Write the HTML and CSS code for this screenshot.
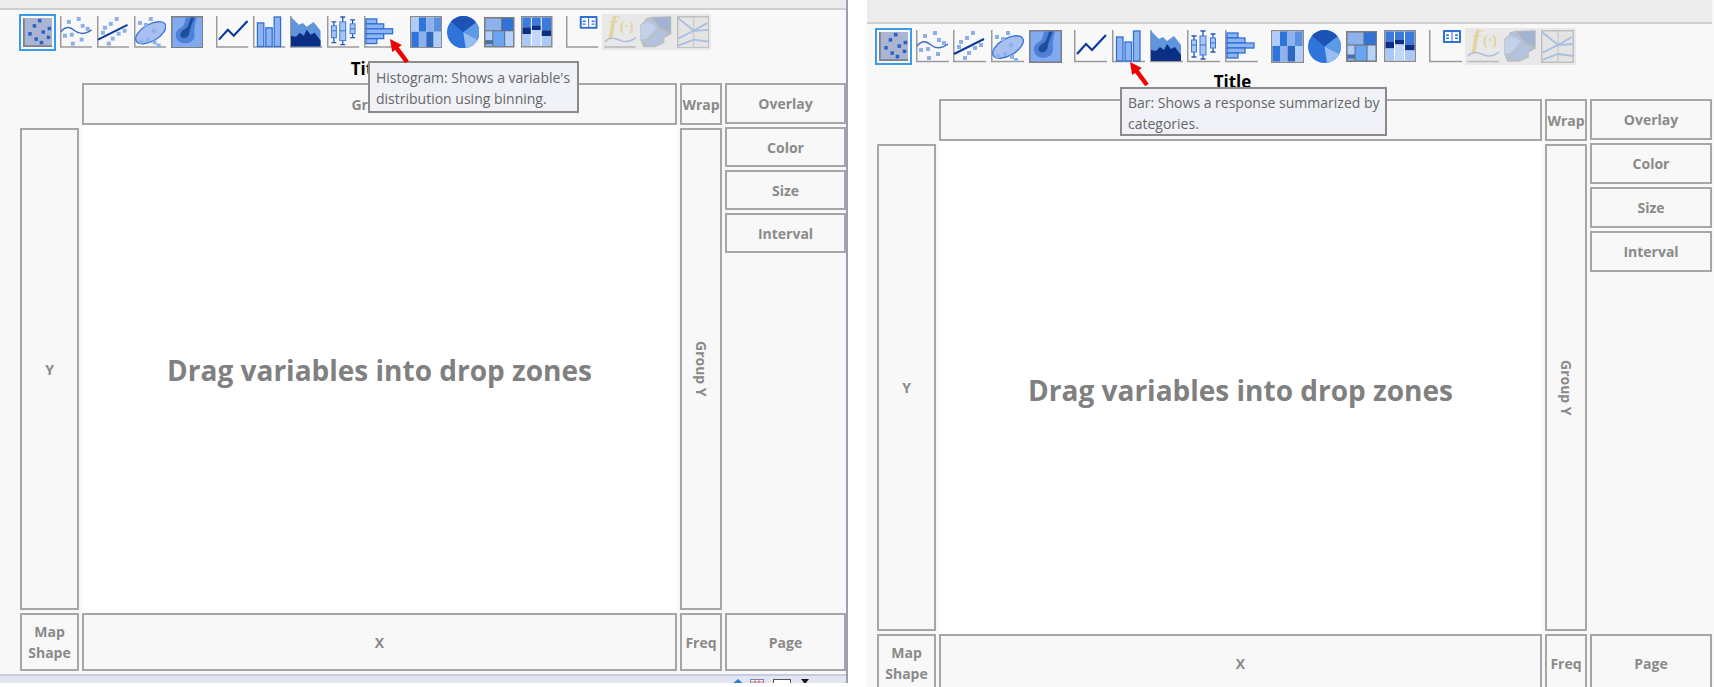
FILE: index.html
```html
<!DOCTYPE html>
<html lang="en">
<head>
<meta charset="utf-8">
<title>Graph Builder</title>
<link rel="stylesheet" href="styles.css">
</head>
<body>
<svg class="sprite" aria-hidden="true">
  <defs>
    <symbol id="axes" viewBox="0 0 33 33"><path d="M.75 0V31.5H33" fill="none" stroke="#9a9a9a" stroke-width="1.5"/></symbol>
    <symbol id="i1" viewBox="0 0 33 33">
      <rect width="33" height="33" fill="#a9b5d2"/><path d="M1 0V32H33" fill="none" stroke="#7f7f8a" stroke-width="2"/>
      <g fill="#2a62c4"><rect x="17" y="1" width="4" height="4"/><rect x="11" y="7" width="4" height="4"/><rect x="28" y="10" width="4" height="4"/><rect x="6" y="16" width="4" height="4"/><rect x="21" y="14" width="4" height="4"/><rect x="27" y="20" width="4" height="4"/><rect x="13" y="22" width="4" height="4"/><rect x="19" y="26" width="4" height="4"/></g>
    </symbol>
    <symbol id="i2" viewBox="0 0 33 33">
      <use href="#axes"/>
      <g fill="#8db0e8"><rect x="7" y="4" width="4" height="4"/><rect x="17" y="1" width="4" height="4"/><rect x="21" y="8" width="4" height="4"/><rect x="26" y="11" width="4" height="4"/><rect x="3" y="18" width="4" height="4"/><rect x="10" y="17" width="4" height="4"/><rect x="20" y="22" width="4" height="4"/><rect x="11" y="26" width="4" height="4"/></g>
      <path d="M1 16C6 10 10 11 15 15S25 19 32 14" fill="none" stroke="#3f6fc0" stroke-width="1.5"/>
    </symbol>
    <symbol id="i3" viewBox="0 0 33 33">
      <use href="#axes"/>
      <g fill="#8db0e8"><rect x="18" y="1" width="4" height="4"/><rect x="12" y="6" width="4" height="4"/><rect x="6" y="10" width="4" height="4"/><rect x="4" y="15" width="4" height="4"/><rect x="26" y="13" width="4" height="4"/><rect x="20" y="16" width="4" height="4"/><rect x="14" y="21" width="4" height="4"/><rect x="10" y="26" width="4" height="4"/></g>
      <path d="M1 24L31 9" stroke="#0b3a9b" stroke-width="2"/>
    </symbol>
    <symbol id="i4" viewBox="0 0 33 33">
      <use href="#axes"/>
      <ellipse cx="17" cy="17" rx="17" ry="8.5" transform="rotate(-30 17 17)" fill="#a9bfef" stroke="#3b78d8" stroke-width="1.4"/>
      <g fill="#8db0e8"><rect x="4" y="5" width="4" height="4"/><rect x="15" y="1" width="4" height="4"/><rect x="10" y="7" width="4" height="4"/><rect x="18" y="13" width="4" height="4"/><rect x="12" y="22" width="4" height="4"/><rect x="19" y="25" width="4" height="4"/><rect x="23" y="28" width="4" height="4"/><rect x="5" y="24" width="4" height="4"/></g>
    </symbol>
    <symbol id="i5" viewBox="0 0 33 33">
      <rect x=".75" y=".75" width="31.5" height="31.5" fill="#82aaef" stroke="#7d7d82" stroke-width="1.5"/>
      <path d="M15 1.5H26C24 9 23 15 24 20C24 27 14 30 8 26C3 22 4 14 10 12C14 10 14 5 15 1.5Z" fill="#4f80d8"/>
      <path d="M20 1.5H24C21 8 19 13 18.500 18C17 23 11 24 9.500 20C9 16 13 14 16 12C18 9 19 5 20 1.5Z" fill="#1f4f99"/>
    </symbol>
    <symbol id="i6" viewBox="0 0 33 33"><use href="#axes"/><path d="M3 24L12 14L18 20L32 5" fill="none" stroke="#0b3a9b" stroke-width="2.2"/></symbol>
    <symbol id="i7" viewBox="0 0 33 33">
      <use href="#axes"/>
      <g fill="#8fb4f2" stroke="#2f6fd8" stroke-width="1.3"><rect x="4.500" y="7" width="6.500" height="24"/><rect x="13" y="12" width="6.500" height="19"/><rect x="21.500" y="1" width="6.500" height="30"/></g>
    </symbol>
    <symbol id="i8" viewBox="0 0 33 33">
      <use href="#axes"/>
      <path d="M1 1L9 9L13 7L17 11L24 6L31 15V31H1Z" fill="#6094dc"/>
      <path d="M1 20L6 21L10 17L14 20L17 14L21 19L25 17L31 25V31H1Z" fill="#0a2f85"/>
    </symbol>
    <symbol id="i9" viewBox="0 0 33 33">
      <use href="#axes"/>
      <path d="M7 6V27M4.500 6H9.500M4.500 27H9.500M16 1V29M13.500 1H18.500M13.500 29H18.500M26 4V22M23.500 4H28.500M23.500 22H28.500" fill="none" stroke="#2458b8" stroke-width="1.3"/>
      <g fill="#a9c5f5" stroke="#3b78d8"><rect x="4.500" y="10" width="5" height="12"/><rect x="13" y="6" width="6" height="19"/><rect x="23.500" y="8" width="5" height="10"/></g>
      <path d="M4.500 15H9.500M13 15H19M23.500 13H28.500" stroke="#2f6fd8"/>
    </symbol>
    <symbol id="i10" viewBox="0 0 33 33">
      <use href="#axes"/>
      <g fill="#8fb4f2" stroke="#2f6fd8" stroke-width="1.3"><rect x="2" y="3" width="11" height="5"/><rect x="2" y="8" width="18" height="5"/><rect x="2" y="13" width="27" height="5"/><rect x="2" y="18" width="18" height="5"/><rect x="2" y="23" width="11" height="5"/></g>
    </symbol>
    <symbol id="i11" viewBox="0 0 33 33">
      <rect x=".75" y=".75" width="31.500" height="31.500" fill="#fff" stroke="#8a8a8a" stroke-width="1.500"/>
      <rect x="1.500" y="1.500" width="7.500" height="14.500" fill="#afcdfa"/><rect x="9" y="1.500" width="7.500" height="14.500" fill="#2f74d8"/><rect x="16.500" y="1.500" width="7.500" height="14.500" fill="#8cb1ec"/><rect x="24" y="1.500" width="7.500" height="14.500" fill="#5b90e0"/>
      <rect x="1.500" y="16" width="7.500" height="15.500" fill="#2f74d8"/><rect x="9" y="16" width="7.500" height="15.500" fill="#8cb1ec"/><rect x="16.500" y="16" width="7.500" height="15.500" fill="#3168bf"/><rect x="24" y="16" width="7.500" height="15.500" fill="#afcdfa"/>
    </symbol>
    <symbol id="i12" viewBox="0 0 33 33">
      <circle cx="16.500" cy="16.500" r="16.500" fill="#2f74d8"/>
      <path d="M16.500 16.500L4 5.700A16.500 16.500 0 0 1 29.500 6.500Z" fill="#1c53b5"/>
      <path d="M16.500 16.500L29.500 6.500A16.500 16.500 0 0 1 31 24Z" fill="#5d9ae6"/>
      <path d="M16.500 16.500L31 24A16.500 16.500 0 0 1 19 33Z" fill="#97bdf3"/>
    </symbol>
    <symbol id="i13" viewBox="0 0 33 33">
      <rect x=".75" y="1.750" width="29.500" height="29.500" fill="#6a6a6a" stroke="#7d7d7d" stroke-width="1.500"/>
      <rect x="1.500" y="2.500" width="16" height="12" fill="#8cb1ec"/><rect x="18.500" y="2.500" width="11" height="12" fill="#2f74d8"/>
      <rect x="1.500" y="15.500" width="7" height="9" fill="#afcdfa"/><rect x="1.500" y="25.500" width="7" height="2" fill="#2f74d8"/><rect x="1.500" y="28.500" width="7" height="2" fill="#8cb1ec"/><rect x="9.500" y="15.500" width="11" height="15" fill="#6aa4f5"/><rect x="21.500" y="15.500" width="8" height="15" fill="#b6d2fb"/>
    </symbol>
    <symbol id="i14" viewBox="0 0 33 33">
      <rect x=".75" y=".75" width="30.500" height="30.500" fill="#fff" stroke="#8a8a8a" stroke-width="1.500"/>
      <rect x="1.500" y="1.500" width="8.500" height="10" fill="#3c7adb"/><rect x="1.500" y="11.500" width="8.500" height="7" fill="#0a2f85"/><rect x="1.500" y="18.500" width="8.500" height="12" fill="#a9c9f8"/>
      <rect x="11" y="1.500" width="9" height="8" fill="#3c7adb"/><rect x="11" y="9.500" width="9" height="5" fill="#0a2f85"/><rect x="11" y="14.500" width="9" height="16" fill="#c0d7fb"/>
      <rect x="21" y="1.500" width="9.500" height="13" fill="#3c7adb"/><rect x="21" y="14.500" width="9.500" height="6" fill="#0a2f85"/><rect x="21" y="20.500" width="9.500" height="10" fill="#a9c9f8"/>
    </symbol>
    <symbol id="i15" viewBox="0 0 33 33">
      <use href="#axes"/>
      <rect x="14" y="0" width="18" height="13" rx="1" fill="#2f6fd8"/><rect x="16" y="2" width="14" height="9" fill="#fff"/>
      <path d="M17 4.500H20V6H17ZM17 7.500H20V9H17ZM26 4.500H29V6H26ZM26 7.500H29V9H26Z" fill="#2f6fd8"/><path d="M23 2V11" stroke="#2f6fd8"/>
    </symbol>
    <symbol id="i16" viewBox="0 0 33 33">
      <text x="5" y="17" class="fn-f">f</text><text x="16" y="15" class="fn-x">(·)</text>
      <path d="M1 26C7 20 12 23 17 25S27 26 32 22" fill="none" stroke="#a9bcdc" stroke-width="1.500"/>
      <path d="M.5 31.500H32" stroke="#b9b9b9" stroke-width="1.500"/>
    </symbol>
    <symbol id="i17" viewBox="0 0 33 33">
      <path d="M12 1.500L31 1V18L24 22V27L15 31H4L1 24V9L6 5V3Z" fill="#b2c3e0" stroke="#bdbdbd" stroke-width="1.500"/>
      <path d="M12 2L31 1V18L21 13Z" fill="#a2b4d2"/>
      <path d="M12 2L21 13L7 24L4 31M21 13L31 18" fill="none" stroke="#bdbdbd" stroke-width="1.500"/>
      <path d="M1 9L8 6L17 11L7 23L1 24Z" fill="#c3d1e9"/>
    </symbol>
    <symbol id="i18" viewBox="0 0 33 33">
      <rect x=".75" y=".75" width="31.500" height="31.500" fill="#e4e4e4" stroke="#c0c0c0" stroke-width="1.500"/>
      <path d="M17 1V32" stroke="#c0c0c0"/>
      <path d="M1 2L17 15L31 7M1 30L17 24L32 26M1 23L17 15L32 14" fill="none" stroke="#a9bfe2" stroke-width="1.800"/>
    </symbol>
  </defs>
</svg>

<main class="panel panel-a">
  <div class="topbar"></div>
  <div class="toolbar">
    <div class="tool-group">
      <svg class="icon icon-on"><use href="#i1"/></svg>
      <svg class="icon"><use href="#i2"/></svg>
      <svg class="icon"><use href="#i3"/></svg>
      <svg class="icon"><use href="#i4"/></svg>
      <svg class="icon"><use href="#i5"/></svg>
    </div>
    <div class="tool-group">
      <svg class="icon"><use href="#i6"/></svg>
      <svg class="icon"><use href="#i7"/></svg>
      <svg class="icon"><use href="#i8"/></svg>
      <svg class="icon"><use href="#i9"/></svg>
      <svg class="icon"><use href="#i10"/></svg>
    </div>
    <div class="tool-group">
      <svg class="icon"><use href="#i11"/></svg>
      <svg class="icon"><use href="#i12"/></svg>
      <svg class="icon"><use href="#i13"/></svg>
      <svg class="icon"><use href="#i14"/></svg>
    </div>
    <div class="tool-group tool-group-last">
      <svg class="icon"><use href="#i15"/></svg>
      <div class="disabled-group">
        <svg class="icon"><use href="#i16"/></svg>
        <svg class="icon"><use href="#i17"/></svg>
        <svg class="icon"><use href="#i18"/></svg>
      </div>
    </div>
  </div>
  <div class="title">Title</div>
  <div class="zones">
    <div class="zone zone-groupx">Group X</div>
    <div class="zone zone-wrap">Wrap</div>
    <div class="stack">
      <div class="zone">Overlay</div>
      <div class="zone">Color</div>
      <div class="zone">Size</div>
      <div class="zone">Interval</div>
    </div>
    <div class="zone zone-y">Y</div>
    <div class="canvas">Drag variables into drop zones</div>
    <div class="zone zone-groupy"><span class="vertical">Group Y</span></div>
    <div class="zone zone-map">Map<br>Shape</div>
    <div class="zone zone-x">X</div>
    <div class="zone zone-freq">Freq</div>
    <div class="zone zone-page">Page</div>
  </div>
  <div class="statusbar">
    <svg class="status-home" viewBox="0 0 14 8"><path d="M7 0L14 6H11.500V8H2.500V6H0Z" fill="#2f7fd0"/></svg>
    <svg class="status-grid" viewBox="0 0 14 8"><rect x=".5" y=".5" width="13" height="8" fill="#fff" stroke="#7a86b8"/><path d="M0 3H14M5 0V8M9 0V8" stroke="#c06a7a"/></svg>
    <span class="status-box"></span>
    <span class="status-tri"></span>
  </div>
  <svg class="arrow" viewBox="0 0 24 28"><path d="M3 2L14.800 8.100L11.800 10.300L21.800 23.700L18.200 26.300L8.200 12.900L5.200 15.100Z" fill="#f00000"/></svg>
  <div class="tooltip">Histogram: Shows a variable's<br>distribution using binning.</div>
</main>

<main class="panel panel-b">
  <div class="topbar"></div>
  <div class="toolbar">
    <div class="tool-group">
      <svg class="icon icon-on"><use href="#i1"/></svg>
      <svg class="icon"><use href="#i2"/></svg>
      <svg class="icon"><use href="#i3"/></svg>
      <svg class="icon"><use href="#i4"/></svg>
      <svg class="icon"><use href="#i5"/></svg>
    </div>
    <div class="tool-group">
      <svg class="icon"><use href="#i6"/></svg>
      <svg class="icon"><use href="#i7"/></svg>
      <svg class="icon"><use href="#i8"/></svg>
      <svg class="icon"><use href="#i9"/></svg>
      <svg class="icon"><use href="#i10"/></svg>
    </div>
    <div class="tool-group">
      <svg class="icon"><use href="#i11"/></svg>
      <svg class="icon"><use href="#i12"/></svg>
      <svg class="icon"><use href="#i13"/></svg>
      <svg class="icon"><use href="#i14"/></svg>
    </div>
    <div class="tool-group tool-group-last">
      <svg class="icon"><use href="#i15"/></svg>
      <div class="disabled-group">
        <svg class="icon"><use href="#i16"/></svg>
        <svg class="icon"><use href="#i17"/></svg>
        <svg class="icon"><use href="#i18"/></svg>
      </div>
    </div>
  </div>
  <div class="title">Title</div>
  <div class="zones">
    <div class="zone zone-groupx">Group X</div>
    <div class="zone zone-wrap">Wrap</div>
    <div class="stack">
      <div class="zone">Overlay</div>
      <div class="zone">Color</div>
      <div class="zone">Size</div>
      <div class="zone">Interval</div>
    </div>
    <div class="zone zone-y">Y</div>
    <div class="canvas">Drag variables into drop zones</div>
    <div class="zone zone-groupy"><span class="vertical">Group Y</span></div>
    <div class="zone zone-map">Map<br>Shape</div>
    <div class="zone zone-x">X</div>
    <div class="zone zone-freq">Freq</div>
    <div class="zone zone-page">Page</div>
  </div>
  <svg class="arrow" viewBox="0 0 24 28"><path d="M3 2L14.800 8.100L11.800 10.300L21.800 23.700L18.200 26.300L8.200 12.900L5.200 15.100Z" fill="#f00000"/></svg>
  <div class="tooltip">Bar: Shows a response summarized by<br>categories.</div>
</main>
</body>
</html>
```

FILE: styles.css
```css
* { box-sizing: border-box; }

html, body {
  margin: 0;
  height: 100%;
  background: #fff;
  overflow: hidden;
}

body {
  display: flex;
  align-items: flex-start;
  gap: 19px;
  font-family: "Open Sans", "Noto Sans", sans-serif;
}

.sprite { position: absolute; width: 0; height: 0; }

.panel {
  position: relative;
  flex: none;
  background: #f8f8f8;
  overflow: hidden;
}

.panel-a {
  width: 848px;
  height: 683px;
  border-right: 2px solid #9aa0ad;
  --icon: 32.5px;
  --tool-gap: 4.5px;
  --group-gap: 13px;
}

.panel-b {
  width: 847px;
  height: 687px;
  --icon: 33px;
  --tool-gap: 4.7px;
  --group-gap: 12.5px;
}

.topbar {
  background: #ececec;
  border-bottom: 2px solid #cfcfcf;
}
.panel-a .topbar { height: 10px; }
.panel-b .topbar { height: 24px; margin-right: 2px; }

.toolbar {
  display: flex;
  gap: var(--group-gap);
  height: 38px;
  align-items: center;
}
.panel-a .toolbar { margin: 3px 0 0 19px; }
.panel-b .toolbar { margin: 3px 0 0 8px; }

.tool-group {
  display: flex;
  align-items: center;
  gap: var(--tool-gap);
}
.tool-group-last { gap: 3px; }

.icon {
  display: block;
  flex: none;
  width: var(--icon);
  height: var(--icon);
}

.icon-on {
  width: 37px;
  height: 37px;
  padding: 2px;
  margin-right: -1px;
  border: 2px solid #3a9be8;
}

.disabled-group {
  display: flex;
  align-items: center;
  gap: 4px;
  padding: 2px 2px;
  background: #e8e8e8;
}

.fn-f { font: italic bold 26px "Liberation Serif", serif; fill: #e3d29a; }
.fn-x { font: bold 14px "Liberation Serif", serif; fill: #e3d29a; }

.title {
  font-size: 17px;
  font-weight: 700;
  line-height: 22px;
  color: #000;
  text-align: center;
}
.panel-a .title { margin: 7px 0 0 72px; width: 595px; height: 25px; }
.panel-b .title { margin: 6px 0 0 64px; width: 603px; height: 28px; }

.zones { display: grid; }

.panel-a .zones {
  margin-left: 20px;
  grid-template-columns: 59px 595px 42px 121px;
  grid-template-rows: 42px 482px 58px;
  gap: 3px;
}

.panel-b .zones {
  margin-left: 10px;
  grid-template-columns: 59px 603px 42px 122px;
  grid-template-rows: 42px 487px 58px;
  gap: 3px;
}

.zone {
  display: flex;
  align-items: center;
  justify-content: center;
  border: 2px solid #a6a6a6;
  background: #f8f8f8;
  font-size: 14px;
  font-weight: 700;
  line-height: 21px;
  text-align: center;
  color: #8a8a8a;
}

.zone-groupx { grid-column: 2; grid-row: 1; }
.zone-wrap { grid-column: 3; grid-row: 1; }
.zone-y { grid-column: 1; grid-row: 2; }
.zone-groupy { grid-column: 3; grid-row: 2; }
.zone-map { grid-column: 1; grid-row: 3; }
.zone-x { grid-column: 2; grid-row: 3; }
.zone-freq { grid-column: 3; grid-row: 3; }
.zone-page { grid-column: 4; grid-row: 3; }

.stack {
  grid-column: 4;
  grid-row: 1 / span 2;
  display: flex;
  flex-direction: column;
  gap: 3px;
}
.stack .zone { height: 41px; flex: none; }
.panel-a .stack .zone { height: 40px; }
.panel-a .stack .zone:first-child { height: 41px; }

.vertical { writing-mode: vertical-rl; }

.canvas {
  grid-column: 2;
  grid-row: 2;
  display: flex;
  align-items: center;
  justify-content: center;
  background: #fff;
  margin: -3px 0;
  font-size: 28px;
  font-weight: 700;
  color: #808080;
}
.panel-a .canvas { padding-top: 2px; }
.panel-b .canvas { padding-top: 5px; }

.statusbar {
  display: flex;
  align-items: flex-start;
  height: 12px;
  margin-top: 3px;
  padding-top: 3px;
  border-top: 2px solid #c6cde0;
  background: #e1e6f2;
}

.status-home { width: 14px; height: 8px; margin-left: 731px; }
.status-grid { width: 14px; height: 8px; margin-left: 5px; }
.status-box { width: 18px; height: 8px; margin-left: 9px; border: 1px solid #555; border-bottom: 0; background: #fff; }
.status-tri { width: 0; height: 0; margin-left: 10px; border-left: 4px solid transparent; border-right: 4px solid transparent; border-top: 5px solid #111; }

.arrow {
  position: absolute;
  width: 24px;
  height: 28px;
  z-index: 3;
}
.panel-a .arrow { left: 387px; top: 37px; }
.panel-b .arrow { left: 260px; top: 60px; }

.tooltip {
  position: absolute;
  z-index: 2;
  padding: 3px 6px;
  border: 2px solid #8c8c8c;
  background: #f0f2f8;
  font-size: 14px;
  line-height: 21px;
  color: #666;
  white-space: nowrap;
}
.panel-a .tooltip { left: 368px; top: 61px; width: 211px; height: 52px; padding-top: 4px; }
.panel-b .tooltip { left: 253px; top: 87px; width: 267px; height: 49px; }
```
